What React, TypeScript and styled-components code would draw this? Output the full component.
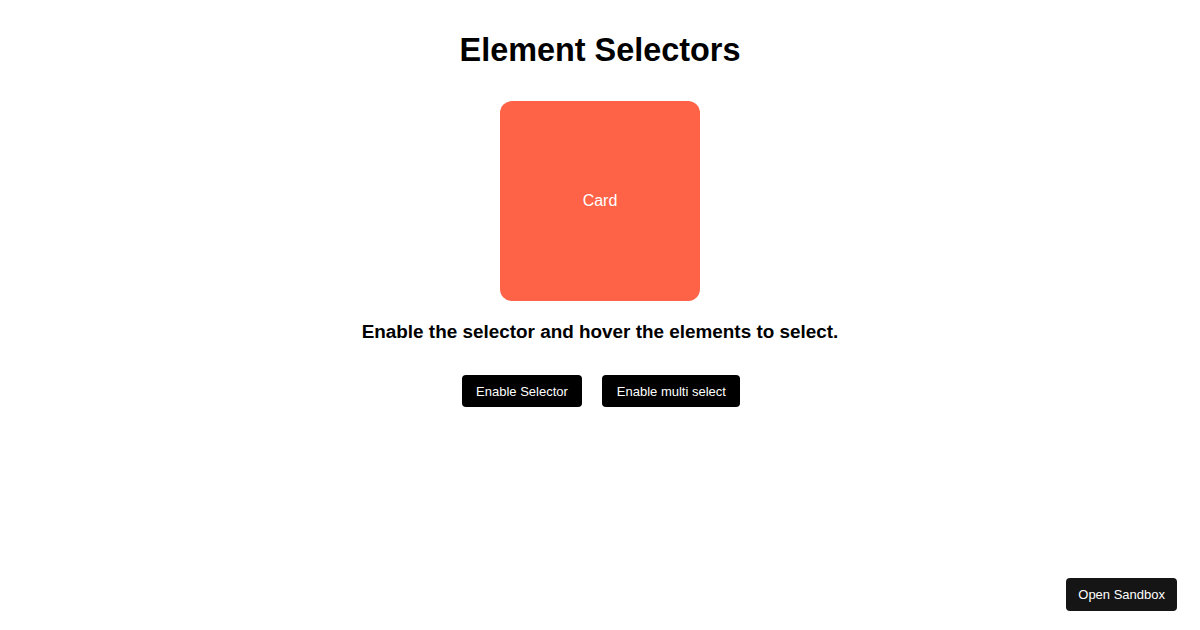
import React from "react";
import styled, { createGlobalStyle } from "styled-components";

const Global = createGlobalStyle`
  html, body { margin: 0; padding: 0; background: #ffffff; }
  body { font-family: "Liberation Sans", Arial, Helvetica, sans-serif; color: #000; }
  * { box-sizing: border-box; }
`;

const Page = styled.main`
  display: flex;
  flex-direction: column;
  align-items: center;
  padding-top: 32px;
  min-height: 630px;
`;

const Title = styled.h1`
  margin: 0;
  font-size: 32.4px;
  line-height: 36px;
  font-weight: 700;
`;

const Card = styled.div`
  margin-top: 33px;
  width: 200px;
  height: 200px;
  border-radius: 12px;
  background: #ff6347;
  color: #ffffff;
  display: flex;
  align-items: center;
  justify-content: center;
  font-size: 16px;
`;

const Hint = styled.h3`
  margin: 20px 0 0;
  font-size: 18.9px;
  line-height: 21px;
  font-weight: 700;
`;

const Actions = styled.div`
  margin-top: 33px;
  padding-left: 2px;
  display: flex;
  gap: 20px;
`;

const Button = styled.button`
  height: 32px;
  padding: 0 14.5px;
  border: none;
  border-radius: 4px;
  background: #000;
  color: #fff;
  font-family: inherit;
  font-size: 13px;
  cursor: pointer;
`;

const SandboxButton = styled.button`
  position: fixed;
  right: 23px;
  bottom: 19px;
  height: 33px;
  padding: 0 12px;
  border: none;
  border-radius: 4px;
  background: #151515;
  color: #fff;
  font-family: inherit;
  font-size: 13px;
`;

export default function App() {
  return (
    <>
      <Global />
      <Page>
        <Title>Element Selectors</Title>
        <Card>Card</Card>
        <Hint>Enable the selector and hover the elements to select.</Hint>
        <Actions>
          <Button>Enable Selector</Button>
          <Button>Enable multi select</Button>
        </Actions>
      </Page>
      <SandboxButton>Open Sandbox</SandboxButton>
    </>
  );
}
